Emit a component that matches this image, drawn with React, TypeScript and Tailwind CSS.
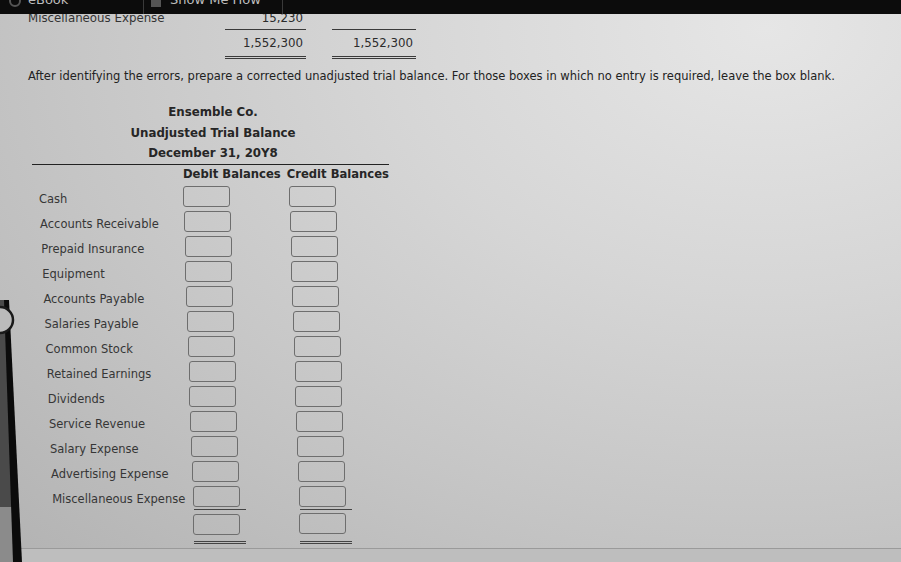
import React from 'react'

const accounts = [
  'Cash',
  'Accounts Receivable',
  'Prepaid Insurance',
  'Equipment',
  'Accounts Payable',
  'Salaries Payable',
  'Common Stock',
  'Retained Earnings',
  'Dividends',
  'Service Revenue',
  'Salary Expense',
  'Advertising Expense',
  'Miscellaneous Expense',
]

function AmountBox() {
  return (
    <input
      type="text"
      className="w-[47px] h-[21px] rounded-[3px] border-[1.5px] border-[#6e6e6e] bg-transparent outline-none"
    />
  )
}

function TopBar() {
  return (
    <div className="relative z-10 h-[14px] bg-[#0c0c0c] overflow-hidden flex text-[13px] text-[#bdbdbd]">
      <div className="w-[143px] flex -mt-[8px]">
        <span className="ml-[9px] mt-[3px] w-[12px] h-[12px] rounded-full border-2 border-[#555]" />
        <span className="ml-[7px] leading-[16px]">eBook</span>
      </div>
      <div className="w-px h-full bg-[#3a3a3a]" />
      <div className="w-[138px] flex -mt-[8px]">
        <span className="ml-[7px] mt-[3px] w-[10px] h-[12px] bg-[#555]" />
        <span className="ml-[9px] leading-[16px]">Show Me How</span>
      </div>
      <div className="w-px h-full bg-[#3a3a3a]" />
    </div>
  )
}

function Bezel() {
  return (
    <svg className="absolute left-0 top-0 pointer-events-none" width="30" height="562" viewBox="0 0 30 562">
      <polygon points="0,300 5,300 13,507 0,507" fill="#4a4a4a" />
      <polygon points="0,507 13,507 14,562 0,562" fill="#8b8b8b" />
      <polygon points="4,300 9,300 22,562 13,562" fill="#0b0b0b" />
      <circle cx="0" cy="320" r="13" fill="#bbbbbb" stroke="#1a1a1a" strokeWidth="2.5" />
    </svg>
  )
}

export default function App() {
  return (
    <div className="relative h-[562px] w-[901px] overflow-hidden flex flex-col bg-[radial-gradient(ellipse_at_85%_5%,#e6e6e6_0%,#d6d6d6_35%,#c6c6c6_65%,#b2b2b2_100%)] font-['DejaVu_Sans',sans-serif] text-[#2b2b2b]">
      <TopBar />

      <div className="pl-[28px]">
        {/* end of the previous trial balance */}
        <div className="flex -mt-[4px] text-[11.8px] leading-[16px]">
          <div className="w-[197px] text-[#333]">Miscellaneous Expense</div>
          <div className="w-[81px] pb-[3px] pr-[3px] text-right border-b border-[#3a3a3a]">15,230</div>
          <div className="ml-[26px] w-[84px] pb-[3px] border-b border-[#3a3a3a]" />
        </div>
        <div className="flex text-[11.8px] leading-[16px]">
          <div className="w-[197px]" />
          <div className="w-[81px] pt-[5px] pb-[5px] pr-[3px] text-right border-b-[3px] border-double border-[#3a3a3a]">
            1,552,300
          </div>
          <div className="ml-[26px] w-[84px] pt-[5px] pb-[5px] pr-[3px] text-right border-b-[3px] border-double border-[#3a3a3a]">
            1,552,300
          </div>
        </div>

        <p className="mt-[9px] text-[11.5px] leading-[16px] text-[#222] whitespace-nowrap">
          After identifying the errors, prepare a corrected unadjusted trial balance. For those boxes in which no entry is
          required, leave the box blank.
        </p>

        <div className="ml-[4px] mt-[18px] w-[357px]">
          <div className="pl-[5px] border-b-[1.5px] border-[#222] text-center font-bold text-[11.8px] leading-[20.5px] text-[#262626]">
            <div>Ensemble Co.</div>
            <div>Unadjusted Trial Balance</div>
            <div>December 31, 20Y8</div>
          </div>
          <div className="flex h-[19px] leading-[19px] pl-[151px] font-bold text-[11.6px] text-[#262626] whitespace-nowrap">
            <div className="w-[105px]">Debit Balances</div>
            <div>Credit Balances</div>
          </div>

          {accounts.map((name, i) => (
            <div key={name} className="flex items-center h-[25px]" style={{ marginLeft: i * 0.8 }}>
              <div
                className="w-[151px] pt-[5px] text-[11.5px] leading-[16px] text-[#363636] whitespace-nowrap"
                style={{ paddingLeft: 7 + i * 0.3 }}
              >
                {name}
              </div>
              <div className="w-[106px]">
                <AmountBox />
              </div>
              <AmountBox />
            </div>
          ))}

          <div className="flex pl-[152px]" style={{ marginLeft: 12 * 0.8 }}>
            <div className="w-[106px]">
              <div className="w-[52px] h-px bg-[#444]" />
            </div>
            <div className="w-[52px] h-px bg-[#444]" />
          </div>
          <div className="flex mt-[3px] pl-[151px]" style={{ marginLeft: 13 * 0.8 }}>
            <div className="w-[106px]">
              <AmountBox />
            </div>
            <AmountBox />
          </div>
          <div className="flex mt-[4px] pl-[152px]" style={{ marginLeft: 13 * 0.8 }}>
            <div className="w-[106px]">
              <div className="w-[52px] h-[3px] border-y border-[#444]" />
            </div>
            <div className="w-[52px] h-[3px] border-y border-[#444]" />
          </div>
        </div>
      </div>

      <div className="mt-auto h-[14px] border-t border-[#9a9a9a] bg-[#bebebe]" />
      <Bezel />
    </div>
  )
}
